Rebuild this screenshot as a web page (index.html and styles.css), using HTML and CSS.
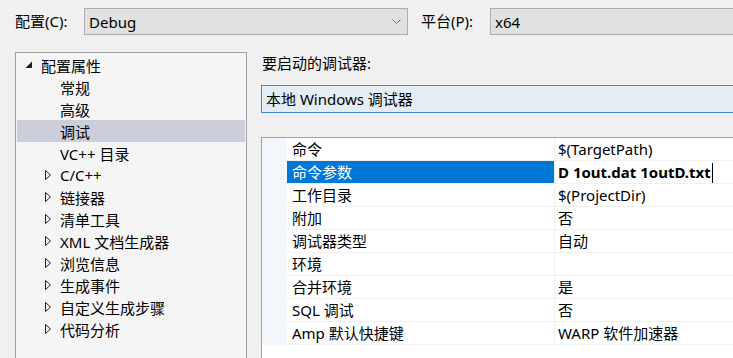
FILE: index.html
```html
<!DOCTYPE html>
<html lang="zh-CN">
    <head>
        <meta charset="UTF-8" />
        <title>调试 属性页</title>
        <link rel="stylesheet" href="styles.css">
    </head>

    <body>
        <div class="toprow">
            <span class="lbl">配置(C):</span>
            <div class="combo combo-cfg">
                <span>Debug</span>
                <svg class="chev" width="9" height="5" viewBox="0 0 9 5">
                    <polyline points="0.5,0.5 4.5,4.5 8.5,0.5" fill="none" stroke="#707070" stroke-width="1" />
                </svg>
            </div>
            <span class="lbl lbl-plat">平台(P):</span>
            <div class="combo combo-plat"><span>x64</span></div>
        </div>

        <div class="main">
            <!-- 왼쪽 트리 -->
            <ul class="tree">
                <li class="node root">
                    <svg class="exp" width="8" height="8" viewBox="0 0 8 8">
                        <polygon points="7,0.5 7,7 0.5,7" fill="#1e1e1e" />
                    </svg>
                    配置属性
                </li>
                <li class="node leaf">常规</li>
                <li class="node leaf">高级</li>
                <li class="node leaf on">调试</li>
                <li class="node leaf">VC++ 目录</li>
                <li class="node sub">C/C++</li>
                <li class="node sub">链接器</li>
                <li class="node sub">清单工具</li>
                <li class="node sub">XML 文档生成器</li>
                <li class="node sub">浏览信息</li>
                <li class="node sub">生成事件</li>
                <li class="node sub">自定义生成步骤</li>
                <li class="node sub">代码分析</li>
            </ul>

            <!-- 오른쪽 속성 -->
            <div class="right">
                <div class="caption">要启动的调试器:</div>
                <div class="dbgsel">本地 Windows 调试器</div>

                <div class="grid">
                    <div class="row"><i class="gut"></i><div class="name">命令</div><div class="val">$(TargetPath)</div></div>
                    <div class="row sel"><i class="gut"></i><div class="name">命令参数</div><div class="val edit">D 1out.dat 1outD.txt<b class="caret"></b></div></div>
                    <div class="row"><i class="gut"></i><div class="name">工作目录</div><div class="val">$(ProjectDir)</div></div>
                    <div class="row"><i class="gut"></i><div class="name">附加</div><div class="val">否</div></div>
                    <div class="row"><i class="gut"></i><div class="name">调试器类型</div><div class="val">自动</div></div>
                    <div class="row"><i class="gut"></i><div class="name">环境</div><div class="val"></div></div>
                    <div class="row"><i class="gut"></i><div class="name">合并环境</div><div class="val">是</div></div>
                    <div class="row"><i class="gut"></i><div class="name">SQL 调试</div><div class="val">否</div></div>
                    <div class="row"><i class="gut"></i><div class="name">Amp 默认快捷键</div><div class="val">WARP 软件加速器</div></div>
                </div>
            </div>
        </div>
    </body>
</html>
```

FILE: styles.css
```css
* {
    box-sizing: border-box;
}
body {
    margin: 0;
    width: 733px;
    height: 358px;
    overflow: hidden;
    background-color: #f0f0f0;
    color: #000;
    font-family: "Noto Sans", "Noto Sans CJK SC", sans-serif;
    font-size: 15px;
}

/* 윗줄: 구성 / 플랫폼 */
.toprow {
    display: flex;
    align-items: center;
    padding: 8px 0 0 15px;
    height: 35px;
}
.toprow > * {
    flex-shrink: 0;
}
.lbl {
    width: 69px;
    line-height: 27px;
}
.lbl-plat {
    margin-left: 13px;
}
.combo {
    display: flex;
    align-items: center;
    height: 27px;
    padding-left: 4px;
    border: 1px solid #adadad;
    background-color: #e1e1e1;
}
.combo-cfg {
    width: 324px;
}
.combo-plat {
    width: 260px;
}
.chev {
    margin-left: auto;
    margin-right: 6px;
}

.main {
    display: flex;
    margin-top: 17px;
}

/* 트리 */
.tree {
    list-style: none;
    margin: 0 0 0 15px;
    padding: 1px;
    width: 232px;
    height: 310px;
    flex-shrink: 0;
    border: 1px solid #a0a0a0;
    background-color: #f5f5f5;
}
.node {
    display: flex;
    align-items: center;
    height: 22px;
    white-space: nowrap;
}
.root {
    padding-left: 8px;
}
.root .exp {
    margin-right: 8px;
}
.leaf {
    padding-left: 43px;
}
.sub {
    padding-left: 28px;
}
.sub::before {
    content: "";
    width: 6px;
    height: 10px;
    margin-right: 9px;
    background: url("data:image/svg+xml;utf8,<svg xmlns='http://www.w3.org/2000/svg' width='6' height='10' viewBox='0 0 6 10'><polygon points='0.5,0.5 5.5,5 0.5,9.5' fill='none' stroke='%231e1e1e' stroke-width='1'/></svg>")
        no-repeat;
}
.on {
    background-color: #cccedb;
}

/* 오른쪽 */
.right {
    margin-left: 14px;
    width: 480px;
    flex-shrink: 0;
}
.caption {
    line-height: 22px;
    padding-left: 1px;
}
.dbgsel {
    margin-top: 11px;
    height: 28px;
    line-height: 26px;
    padding-left: 4px;
    border: 1px solid #3d8bd0;
    background-color: #e4ecf4;
}

/* 속성 그리드 */
.grid {
    margin-top: 24px;
    height: 225px;
    border: 1px solid #a0a0a0;
    background-color: #fff;
}
.row {
    display: grid;
    grid-template-columns: 25px 268px 1fr;
    height: 23px;
}
.gut {
    background-color: #f3f6fb;
}
.name,
.val {
    line-height: 22px;
    border-bottom: 1px solid #f0f0f0;
    white-space: nowrap;
}
.name {
    padding-left: 5px;
    border-right: 1px solid #f0f0f0;
}
.val {
    padding-left: 3px;
}
.sel .name {
    background-color: #0078d7;
    color: #fff;
}
.edit {
    font-weight: bold;
}
.caret {
    display: inline-block;
    width: 1px;
    height: 20px;
    margin-left: 1px;
    vertical-align: -5px;
    background-color: #000;
}
```
